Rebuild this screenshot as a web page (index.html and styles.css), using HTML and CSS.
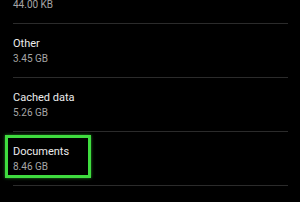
FILE: index.html
```
<!DOCTYPE html>
<html lang="en">

<head>
    <meta charset="UTF-8">
    <meta name="viewport" content="width=device-width, initial-scale=1.0">
    <title>Storage</title>
    <link rel="stylesheet" href="styles.css">
</head>

<body>
    <div class="storage-list">
        <div class="storage-item">
            <div class="item-size">44.00 KB</div>
        </div>
        <div class="storage-item">
            <div class="item-title">Other</div>
            <div class="item-size">3.45 GB</div>
        </div>
        <div class="storage-item">
            <div class="item-title">Cached data</div>
            <div class="item-size">5.26 GB</div>
        </div>
        <div class="storage-item highlighted">
            <div class="item-title">Documents</div>
            <div class="item-size">8.46 GB</div>
        </div>
    </div>
</body>

</html>
```

FILE: styles.css
```
body {
    margin: 0;
    background: #000;
    font-family: Roboto, "Liberation Sans", sans-serif;
    overflow: hidden;
}

.storage-list {
    margin-top: -16px;
}

.storage-item {
    position: relative;
    margin: 0 12px 0 13px;
    padding: 13px 0 12px;
    border-bottom: 1px solid #2b2b2b;
}

.item-title {
    font-size: 11px;
    line-height: 14px;
    color: #ececec;
}

.item-size {
    margin-top: 1px;
    font-size: 10px;
    line-height: 13px;
    color: #a6a6a6;
}

.highlighted::after {
    content: "";
    position: absolute;
    left: -8px;
    top: 3px;
    width: 80px;
    height: 37px;
    border: 3px solid #3fdc3f;
    box-shadow: 0 0 3px rgba(63, 220, 63, 0.6);
}
```
